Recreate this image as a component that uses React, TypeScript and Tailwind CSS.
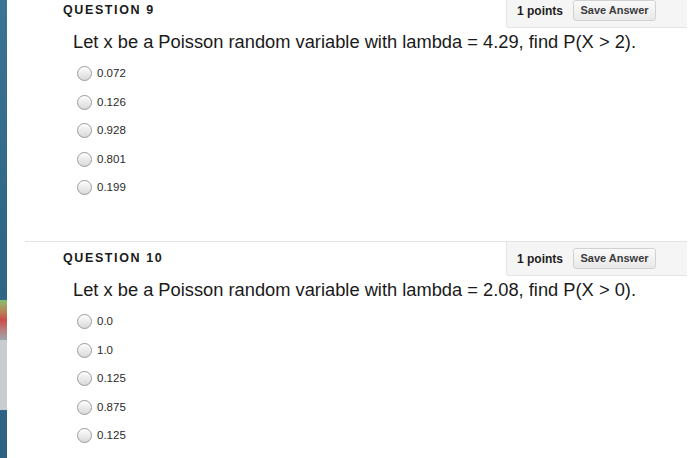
import React from 'react';

interface Question {
  num: number;
  text: string;
  options: string[];
}

const questions: Question[] = [
  {
    num: 9,
    text: 'Let x be a Poisson random variable with lambda = 4.29, find P(X > 2).',
    options: ['0.072', '0.126', '0.928', '0.801', '0.199'],
  },
  {
    num: 10,
    text: 'Let x be a Poisson random variable with lambda = 2.08, find P(X > 0).',
    options: ['0.0', '1.0', '0.125', '0.875', '0.125'],
  },
];

const Radio = () => (
  <span className="h-[15px] w-[15px] shrink-0 rounded-full border border-[#9a9a9a] bg-gradient-to-b from-[#fdfdfd] to-[#d9d9d9] shadow-[inset_0_1px_1px_rgba(255,255,255,0.9)]" />
);

const QuestionBlock = ({ q, first }: { q: Question; first?: boolean }) => (
  <section
    className={
      first
        ? 'mt-[-7px] border-t border-[#e3e3e3]'
        : 'mt-[46px] border-t border-[#e3e3e3]'
    }
  >
    <div className="flex items-start justify-between">
      <h2 className="pl-[38px] pt-[9px] text-[12.5px] font-bold leading-[14px] tracking-[1.6px] text-[#1a1a1a]">
        QUESTION {q.num}
      </h2>
      <div className="flex h-[34px] w-[181px] items-center rounded-bl-[3px] border-b border-l border-[#e4e4e4] bg-[#f5f5f5] pl-[10px]">
        <span className="text-[12px] font-bold text-[#1e1e1e]">1 points</span>
        <button className="ml-[10px] h-[21px] w-[83px] rounded-[3px] border border-[#d2d2d2] bg-gradient-to-b from-[#fafafa] to-[#e9e9e9] text-[11px] font-bold text-[#3c3c3c]">
          Save Answer
        </button>
      </div>
    </div>
    <p className="pl-[48px] pt-[2px] text-[18.3px] leading-[24px] text-[#1a1a1a]">{q.text}</p>
    <ul className="flex flex-col gap-[13.5px] pl-[52px] pt-[12px]">
      {q.options.map((opt, i) => (
        <li key={i} className="flex h-[15px] items-center gap-[5px]">
          <Radio />
          <span className="text-[11.5px] leading-[15px] text-[#2a2a2a]">{opt}</span>
        </li>
      ))}
    </ul>
  </section>
);

export default function App() {
  return (
    <div
      className="flex h-[458px] w-[700px] overflow-hidden bg-white"
      style={{ fontFamily: '"Liberation Sans", Arial, sans-serif' }}
    >
      <aside className="relative h-full w-[7px] shrink-0 bg-gradient-to-b from-[#3b7396] via-[#2f6788] to-[#2d6283]">
        <div className="absolute left-0 top-[300px] h-[40px] w-[7px] bg-gradient-to-b from-[#7fbf6a] via-[#c94a4a] to-[#9aa6ad]" />
        <div className="absolute left-0 top-[340px] h-[70px] w-[7px] bg-[#c9cdd1]" />
      </aside>
      <main className="ml-[18px] mr-[13px] flex-1">
        <QuestionBlock q={questions[0]} first />
        <QuestionBlock q={questions[1]} />
      </main>
    </div>
  );
}
